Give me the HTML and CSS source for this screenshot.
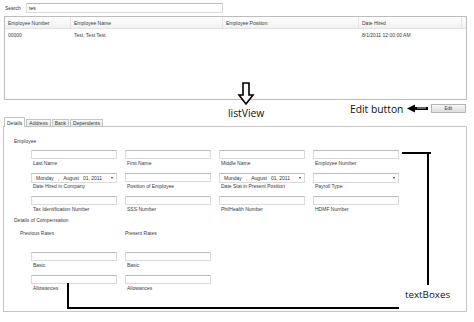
FILE: index.html
```html
<!DOCTYPE html>
<html lang="en">
<head>
    <meta charset="UTF-8">
    <title>Employee</title>
    <link rel="stylesheet" href="styles.css">
</head>
<body>
    <!-- search -->
    <div class="search-row">
        <span class="search-label">Search</span>
        <div class="textbox search-box">tes</div>
    </div>

    <!-- list of employees -->
    <div class="listview">
        <div class="lv-row lv-head">
            <div class="col c1">Employee Number</div>
            <div class="col c2">Employee Name</div>
            <div class="col c3">Employee Position</div>
            <div class="col c4">Date Hired</div>
        </div>
        <div class="lv-row">
            <div class="col c1">00000</div>
            <div class="col c2">Test, Test Test</div>
            <div class="col c3"></div>
            <div class="col c4">8/1/2011 12:00:00 AM</div>
        </div>
    </div>

    <div class="toolbar">
        <div class="edit-btn">Edit</div>
    </div>

    <!-- tabs -->
    <div class="tabs">
        <div class="tab active">Details</div>
        <div class="tab">Address</div>
        <div class="tab">Bank</div>
        <div class="tab">Dependents</div>
    </div>
    <div class="panel">
        <div class="group-title">Employee</div>
        <div class="field-grid">
            <div class="field"><div class="textbox"></div><div class="field-label">Last Name</div></div>
            <div class="field"><div class="textbox"></div><div class="field-label">First Name</div></div>
            <div class="field"><div class="textbox"></div><div class="field-label">Middle Name</div></div>
            <div class="field"><div class="textbox"></div><div class="field-label">Employee Number</div></div>

            <div class="field"><div class="textbox picker"><span class="date-text">Monday   ,   August   01, 2011</span><span class="drop"></span></div><div class="field-label">Date Hired in Company</div></div>
            <div class="field"><div class="textbox"></div><div class="field-label">Position of Employee</div></div>
            <div class="field"><div class="textbox picker"><span class="date-text">Monday   ,   August   01, 2011</span><span class="drop"></span></div><div class="field-label">Date Stat in Present Position</div></div>
            <div class="field"><div class="textbox picker"><span class="date-text"></span><span class="drop"></span></div><div class="field-label">Payroll Type</div></div>

            <div class="field"><div class="textbox"></div><div class="field-label">Tax Identification Number</div></div>
            <div class="field"><div class="textbox"></div><div class="field-label">SSS Number</div></div>
            <div class="field"><div class="textbox"></div><div class="field-label">PhilHealth Number</div></div>
            <div class="field"><div class="textbox"></div><div class="field-label">HDMF Number</div></div>
        </div>

        <div class="group-title comp-title">Details of Compensation</div>
        <div class="rate-heads">
            <span class="rate-prev">Previous Rates</span>
            <span>Present Rates</span>
        </div>
        <div class="field-grid rate-grid">
            <div class="field"><div class="textbox"></div><div class="field-label">Basic</div></div>
            <div class="field"><div class="textbox"></div><div class="field-label">Basic</div></div>
            <div class="field"><div class="textbox"></div><div class="field-label">Allowances</div></div>
            <div class="field"><div class="textbox"></div><div class="field-label">Allowances</div></div>
        </div>
    </div>

    <!-- annotations drawn over the screenshot -->
    <svg class="annot" width="474" height="322" viewBox="0 0 474 322">
        <path d="M243 83 H249 V95 H253 L246 104 L239 95 H243 Z" fill="#fff" stroke="#000" stroke-width="1.6" stroke-linejoin="miter"/>
        <path d="M407 108.5 L415 104.5 V107 H428 V110 H415 V112.5 Z" fill="#000"/>
        <path d="M417 108 H426" stroke="#fff" stroke-width="0.8"/>
        <path d="M402 153 H431 M428 152 V285" stroke="#000" stroke-width="2" fill="none"/>
        <path d="M68 283 V308 H399" stroke="#000" stroke-width="2" fill="none"/>
    </svg>
    <div class="note note-list">listView</div>
    <div class="note note-edit">Edit button</div>
    <div class="note note-boxes">textBoxes</div>
</body>
</html>
```

FILE: styles.css
```css
body {
    margin: 0;
    width: 474px;
    height: 322px;
    background: #fff;
    font-family: "Liberation Sans", Arial, sans-serif;
    font-size: 5px;
    color: #3a3a3a;
    position: relative;
    overflow: hidden;
}

.search-row {
    display: flex;
    align-items: center;
    height: 10px;
    padding: 3px 0 0 5px;
}

.search-label {
    width: 21px;
}

.textbox {
    box-sizing: border-box;
    height: 9px;
    border: 1px solid #dadada;
    border-top-color: #bcbcbc;
    background: #fff;
    display: flex;
    align-items: center;
}

.search-box {
    width: 197px;
    height: 10px;
    padding-left: 2px;
    color: #222;
}

.listview {
    box-sizing: border-box;
    margin: 3px 0 0 4px;
    width: 463px;
    height: 84px;
    border: 1px solid #bdbdbd;
}

    .lv-row {
        display: flex;
        height: 11px;
        align-items: center;
    }

    .lv-head {
        background: linear-gradient(#fff, #f1f1f1);
        border-bottom: 1px solid #e2e2e2;
    }

        .lv-head .col {
            border-right: 1px solid #e6e6e6;
            height: 100%;
            display: flex;
            align-items: center;
            box-sizing: border-box;
        }

    .col {
        padding-left: 3px;
        box-sizing: border-box;
    }

    .c1 { width: 66px; }
    .c2 { width: 152px; }
    .c3 { width: 136px; }
    .c4 { width: 103px; }

.toolbar {
    display: flex;
    justify-content: flex-end;
    height: 17px;
    padding-right: 8px;
}

.edit-btn {
    margin-top: 4px;
    width: 35px;
    height: 9px;
    box-sizing: border-box;
    border: 1px solid #b5b5b5;
    background: linear-gradient(#f6f6f6, #dedede);
    display: flex;
    align-items: center;
    justify-content: center;
    font-size: 4.5px;
}

.tabs {
    display: flex;
    align-items: flex-end;
    height: 9px;
    padding-left: 4px;
}

.tab {
    height: 7px;
    box-sizing: border-box;
    border: 1px solid #c4c4c4;
    border-bottom: none;
    background: linear-gradient(#f8f8f8, #e8e8e8);
    padding: 0 2px;
    display: flex;
    align-items: center;
    margin-right: 1px;
}

    .tab.active {
        height: 10px;
        background: #fff;
        position: relative;
        top: 1px;
    }

.panel {
    box-sizing: border-box;
    margin-left: 3px;
    width: 464px;
    height: 186px;
    border: 1px solid #c4c4c4;
    padding-left: 10px;
}

.group-title {
    line-height: 7px;
    margin-top: 11px;
}

.field-grid {
    display: grid;
    grid-template-columns: repeat(4, 86px);
    column-gap: 8px;
    row-gap: 6px;
    margin: 5px 0 0 17px;
}

.field-label {
    line-height: 7px;
    margin-top: 1px;
    padding-left: 2px;
}

.picker {
    justify-content: space-between;
    padding: 0 3px 0 4px;
    height: 10px;
    margin-bottom: -1px;
}

.date-text {
    white-space: pre;
    color: #333;
}

.drop {
    width: 0;
    height: 0;
    border-left: 1.5px solid transparent;
    border-right: 1.5px solid transparent;
    border-top: 2px solid #333;
}

.comp-title {
    margin-top: 4px;
}

.rate-heads {
    display: flex;
    line-height: 7px;
    margin: 6px 0 0 6px;
}

.rate-prev {
    width: 105px;
}

.rate-grid {
    grid-template-columns: repeat(2, 86px);
    margin-top: 15px;
}

.annot {
    position: absolute;
    left: 0;
    top: 0;
    pointer-events: none;
}

.note {
    position: absolute;
    font-family: "Open Sans", "Noto Sans", sans-serif;
    font-size: 10.3px;
    line-height: 12px;
    color: #111;
}

.note-list { left: 228px; top: 107px; }
.note-edit { left: 350px; top: 103px; }
.note-boxes { left: 405px; top: 289px; font-size: 9.8px; }
```
